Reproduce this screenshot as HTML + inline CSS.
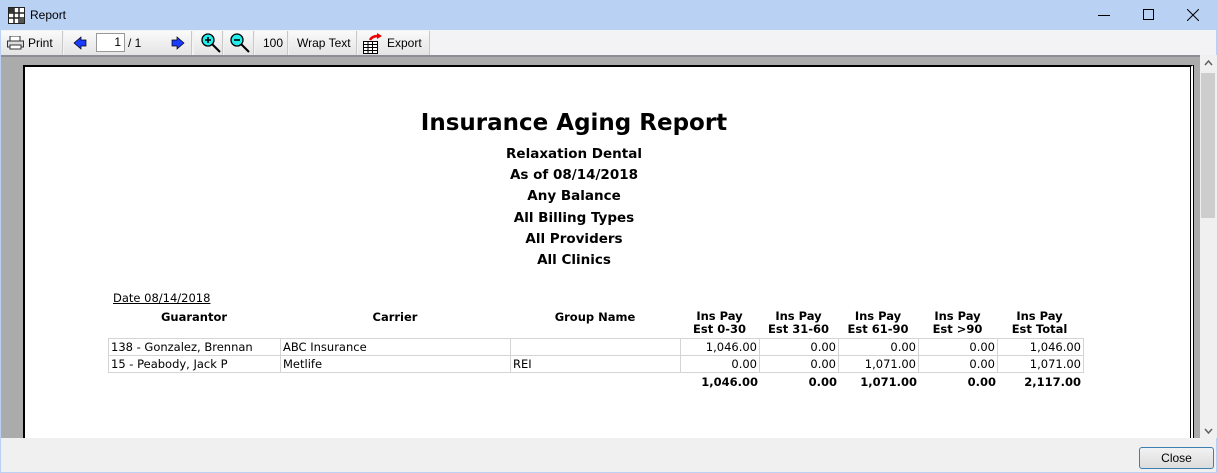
<!DOCTYPE html>
<html><head><style>
*{margin:0;padding:0;box-sizing:border-box}
body{width:1218px;height:473px;overflow:hidden;background:#b9d1f3;font-family:"DejaVu Sans","Liberation Sans",sans-serif;position:relative}
.a{position:absolute}
.tb{font-family:"Liberation Sans",sans-serif;font-size:12px;color:#000}
.btn{position:absolute;top:31px;height:24px;background:linear-gradient(#fafafa,#e4e4e4);border-right:1px solid #c8c8c8;font-family:"Liberation Sans",sans-serif;font-size:12px;line-height:24px;padding:0 6px;white-space:nowrap}
.r{font-size:11.5px;white-space:nowrap}
.h{font-weight:bold;font-size:11.5px;text-align:center;line-height:13px;white-space:nowrap}
td{border:1px solid #d4d4d4;font-size:11.5px;height:17px;padding:0 2px;white-space:nowrap}
td.n{text-align:right}
</style></head><body>
<svg class="a" style="left:8px;top:7px" width="17" height="17"><rect x="0.5" y="0.5" width="16" height="16" fill="#fff" stroke="#222"/><path d="M1 6h15M1 11h15M6 1v15M11 1v15" stroke="#222" stroke-width="1.5"/><rect x="1" y="1" width="5" height="5" fill="#333"/><rect x="11" y="11" width="5" height="5" fill="#555"/></svg>
<div class="a tb" style="left:30px;top:8px">Report</div>
<div class="a" style="left:1098px;top:15px;width:12px;height:1px;background:#000"></div>
<div class="a" style="left:1143px;top:9px;width:11px;height:11px;border:1px solid #000"></div>
<svg class="a" style="left:1187px;top:9px" width="12" height="12"><path d="M0 0L12 12M12 0L0 12" stroke="#000"/></svg>
<div class="a" style="left:1px;top:30px;width:1215px;height:25px;background:#f3f2f4"></div>
<div class="btn" style="left:1px;width:62px;padding-left:27px">Print</div>
<svg class="a" style="left:7px;top:36px" width="17" height="14"><rect x="3" y="0" width="10" height="5" fill="#fff" stroke="#333"/><rect x="0.5" y="5" width="16" height="6" fill="#ddd" stroke="#333"/><rect x="3" y="9" width="11" height="4" fill="#fff" stroke="#333"/></svg>
<div class="btn" style="left:64px;width:128px"></div>
<svg class="a" style="left:73px;top:36px" width="14" height="14"><path d="M1 7L8 1V4H13V10H8V13Z" fill="#1a3cff" stroke="#000" stroke-width=".7"/></svg>
<div class="a" style="left:96px;top:33px;width:29px;height:19px;background:#fff;border:1px solid #999;font-family:'Liberation Sans';font-size:12px;text-align:right;padding-right:3px;line-height:17px">1</div>
<div class="a tb" style="left:128px;top:36px">/ 1</div>
<svg class="a" style="left:171px;top:36px" width="14" height="14"><path d="M13 7L6 1V4H1V10H6V13Z" fill="#1a3cff" stroke="#000" stroke-width=".7"/></svg>
<div class="btn" style="left:194px;width:29px"></div>
<svg class="a" style="left:200px;top:33px" width="22" height="20"><circle cx="8" cy="7" r="6" fill="#2ee" stroke="#000" stroke-width="1.3"/><path d="M5 7h6M8 4v6" stroke="#000" stroke-width="1.6"/><path d="M12 11l8 8" stroke="#000" stroke-width="2"/></svg>
<div class="btn" style="left:224px;width:30px"></div>
<svg class="a" style="left:229px;top:33px" width="22" height="20"><circle cx="8" cy="7" r="6" fill="#2ee" stroke="#000" stroke-width="1.3"/><path d="M5 7h6" stroke="#000" stroke-width="1.6"/><path d="M12 11l8 8" stroke="#000" stroke-width="2"/></svg>
<div class="btn" style="left:255px;width:33px;padding-left:8px">100</div>
<div class="btn" style="left:289px;width:68px;padding-left:8px">Wrap Text</div>
<div class="btn" style="left:358px;width:72px;padding-left:29px">Export</div>
<svg class="a" style="left:362px;top:33px" width="24" height="22"><path d="M8 7Q10 3 16 3" stroke="#e00" stroke-width="2.5" fill="none"/><path d="M15 0L20 3L15 6Z" fill="#e00"/><rect x="1.5" y="8.5" width="14" height="12" fill="#fff" stroke="#000"/><path d="M1 11.5h15M1 14.5h15M1 17.5h15M6 8v13M10.5 8v13" stroke="#000"/></svg>
<div class="a" style="left:1px;top:55px;width:1199px;height:383px;background:#ababab;border-top:2px solid #8d8d95"></div>
<div class="a" style="left:23px;top:65px;width:1171px;height:380px;background:#fff;border:2px solid #000;border-right:4px double #000"></div>
<div class="a" style="left:1200px;top:55px;width:17px;height:383px;background:#f0f0f0"></div>
<div class="a" style="left:1201px;top:73px;width:14px;height:145px;background:#cdcdcd"></div>
<svg class="a" style="left:1204px;top:60px" width="9" height="6"><path d="M1 5L4.5 1L8 5" stroke="#606060" stroke-width="1.5" fill="none"/></svg>
<svg class="a" style="left:1204px;top:428px" width="9" height="6"><path d="M1 1L4.5 5L8 1" stroke="#606060" stroke-width="1.5" fill="none"/></svg>
<div class="a" style="left:1px;top:438px;width:1215px;height:34px;background:#f0f0f0"></div>
<div class="a" style="left:1139px;top:447px;width:75px;height:22px;border:1px solid #3c7fb1;border-radius:3px;background:linear-gradient(#f2f2f2,#dcdcdc);font-family:'Liberation Sans';font-size:12px;text-align:center;line-height:20px">Close</div>
<div class="a" style="left:24px;top:110px;width:1100px;text-align:center;font-weight:bold;font-size:23px">Insurance Aging Report</div>
<div class="a" style="left:24px;top:144px;width:1100px;text-align:center;font-weight:bold;font-size:13.5px;line-height:21.2px">Relaxation Dental<br>As of 08/14/2018<br>Any Balance<br>All Billing Types<br>All Providers<br>All Clinics</div>
<div class="a r" style="left:113px;top:291px;text-decoration:underline">Date 08/14/2018</div>
<div class="a h" style="left:108px;top:311px;width:172px">Guarantor</div>
<div class="a h" style="left:280px;top:311px;width:230px">Carrier</div>
<div class="a h" style="left:510px;top:311px;width:170px">Group Name</div>
<div class="a h" style="left:680px;top:310px;width:79px">Ins Pay<br>Est 0-30</div>
<div class="a h" style="left:759px;top:310px;width:79px">Ins Pay<br>Est 31-60</div>
<div class="a h" style="left:838px;top:310px;width:80px">Ins Pay<br>Est 61-90</div>
<div class="a h" style="left:918px;top:310px;width:79px">Ins Pay<br>Est &gt;90</div>
<div class="a h" style="left:997px;top:310px;width:85px">Ins Pay<br>Est Total</div>
<table class="a" style="left:108px;top:338px;border-collapse:collapse;table-layout:fixed;width:975px">
<colgroup><col style="width:172px"><col style="width:230px"><col style="width:170px"><col style="width:79px"><col style="width:79px"><col style="width:80px"><col style="width:79px"><col style="width:86px"></colgroup>
<tr><td>138 - Gonzalez, Brennan</td><td>ABC Insurance</td><td></td><td class="n">1,046.00</td><td class="n">0.00</td><td class="n">0.00</td><td class="n">0.00</td><td class="n">1,046.00</td></tr>
<tr><td>15 - Peabody, Jack P</td><td>Metlife</td><td>REI</td><td class="n">0.00</td><td class="n">0.00</td><td class="n">1,071.00</td><td class="n">0.00</td><td class="n">1,071.00</td></tr>
</table>
<div class="a r" style="left:680px;top:375px;width:78px;text-align:right;font-weight:bold">1,046.00</div>
<div class="a r" style="left:759px;top:375px;width:78px;text-align:right;font-weight:bold">0.00</div>
<div class="a r" style="left:838px;top:375px;width:79px;text-align:right;font-weight:bold">1,071.00</div>
<div class="a r" style="left:918px;top:375px;width:78px;text-align:right;font-weight:bold">0.00</div>
<div class="a r" style="left:997px;top:375px;width:84px;text-align:right;font-weight:bold">2,117.00</div>
</body></html>
